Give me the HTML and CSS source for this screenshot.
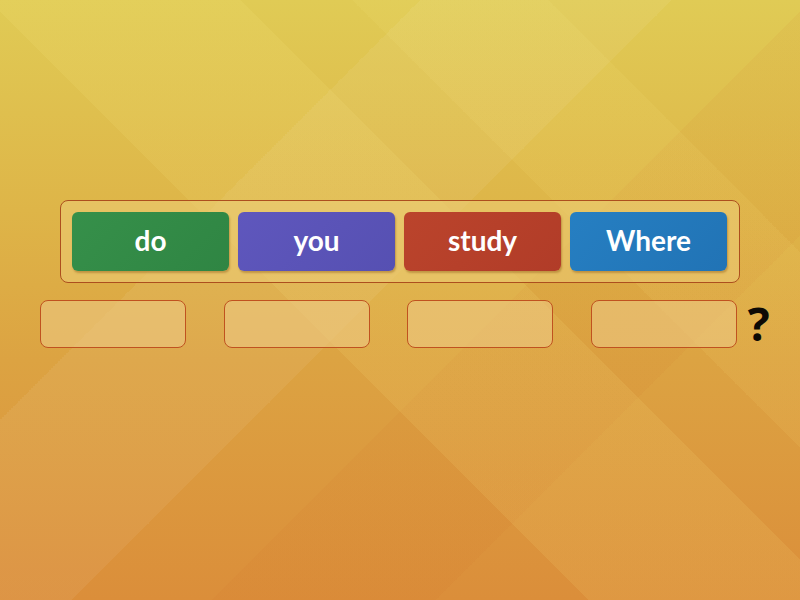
FILE: index.html
```html
<!DOCTYPE html>
<html lang="en">
<head>
<meta charset="utf-8">
<title>Unjumble</title>
<link rel="stylesheet" href="styles.css">
</head>
<body>
  <main class="stage">
    <div class="tray">
      <div class="tile tile-green">do</div>
      <div class="tile tile-purple">you</div>
      <div class="tile tile-red">study</div>
      <div class="tile tile-blue">Where</div>
    </div>
    <div class="slots">
      <div class="slot"></div>
      <div class="slot"></div>
      <div class="slot"></div>
      <div class="slot"></div>
      <span class="punct">?</span>
    </div>
  </main>
</body>
</html>
```
FILE: styles.css
```css
html, body {
  margin: 0;
  padding: 0;
}

body {
  width: 800px;
  height: 600px;
  overflow: hidden;
  font-family: "Lato", "Open Sans", sans-serif;
  background:
    linear-gradient(135deg, rgba(255,255,255,0) 0 30%, rgba(255,255,255,0.06) 30% 48%, rgba(255,255,255,0) 48% 100%),
    linear-gradient(45deg, rgba(255,255,255,0) 0 42%, rgba(255,240,140,0.10) 42% 60%, rgba(255,255,255,0) 60% 100%),
    linear-gradient(45deg, rgba(255,255,255,0) 0 68%, rgba(255,240,140,0.08) 68% 82%, rgba(255,255,255,0) 82% 100%),
    linear-gradient(135deg, rgba(0,0,0,0) 0 58%, rgba(200,90,30,0.06) 58% 74%, rgba(0,0,0,0) 74% 100%),
    linear-gradient(180deg, #e0cb55 0%, #deb548 35%, #dca342 60%, #db8e3a 100%);
}

.stage {
  display: flex;
  flex-direction: column;
  padding-top: 200px;
}

.tray {
  display: flex;
  gap: 9px;
  width: 656px;
  margin-left: 60px;
  padding: 11px;
  border: 1px solid #ad4f1e;
  border-radius: 8px;
  background: rgba(236, 205, 120, 0.55);
}

.tile {
  flex: 0 0 157px;
  height: 59px;
  box-sizing: border-box;
  padding-bottom: 4px;
  border-radius: 6px;
  display: flex;
  align-items: center;
  justify-content: center;
  color: #ffffff;
  font-size: 28px;
  font-weight: 700;
  box-shadow: 1px 2px 2px rgba(120, 70, 10, 0.35);
}

.tile-green  { background: linear-gradient(135deg, #36904a, #2f8543); }
.tile-purple { background: linear-gradient(135deg, #5f57bd, #5650b2); }
.tile-red    { background: linear-gradient(135deg, #bb442c, #b13c28); }
.tile-blue   { background: linear-gradient(135deg, #267fc2, #2173b5); }

.slots {
  display: flex;
  align-items: flex-start;
  gap: 37.67px;
  margin-top: 17px;
  padding-left: 40px;
}

.slot {
  flex: 0 0 144px;
  height: 46px;
  border: 1px solid #c0521f;
  border-radius: 8px;
  background: rgba(236, 200, 130, 0.6);
}

.punct {
  margin-left: -27px;
  margin-top: -6px;
  font-family: "Open Sans", "Lato", sans-serif;
  font-size: 46px;
  font-weight: 700;
  line-height: 58px;
  color: #0d0a05;
}
```
